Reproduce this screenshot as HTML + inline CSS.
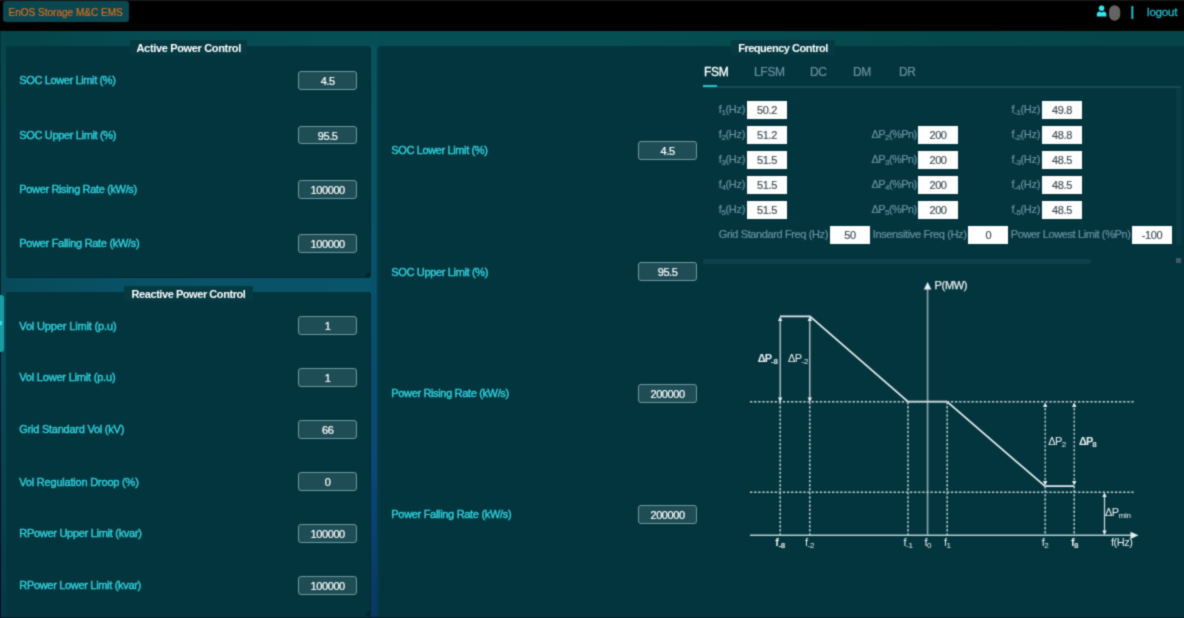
<!DOCTYPE html>
<html>
<head>
<meta charset="utf-8">
<title>EnOS Storage M&amp;C EMS</title>
<style>
*{box-sizing:border-box;margin:0;padding:0}
html,body{width:1184px;height:618px;overflow:hidden;background:#044a53;font-family:"Liberation Sans",sans-serif;}
#root{position:relative;width:1184px;height:618px;overflow:hidden;background:linear-gradient(90deg,#054347 0%,#054a50 10%,#054e54 28%,#054e52 52%,#05484c 80%,#054448 100%);filter:url(#bl);}
.abs{position:absolute}
#hdr{left:0;top:0;width:1184px;height:31px;background:#000}
#logo{left:3px;top:1px;width:126px;height:21px;background:#0b4750;border-radius:3px;color:#de6e1c;font-size:11px;line-height:22px;text-align:center;letter-spacing:0;white-space:nowrap;overflow:hidden}
#logo span{display:inline-block;transform:scaleX(0.912);transform-origin:50% 50%;margin:0 -20px;-webkit-text-stroke:0.2px #de6e1c}
.panel{background:#03353f;border-radius:3px}
.ptitle{position:absolute;padding-top:1px;height:15px;background:#053a43;color:#fff;font-weight:bold;font-size:11px;line-height:15px;text-align:center;white-space:nowrap;letter-spacing:-0.3px;border-radius:1px}
.lbl{position:absolute;-webkit-text-stroke:0.4px #31d0da;color:#31d0da;margin-top:-0.5px;font-size:11px;line-height:14px;white-space:nowrap;letter-spacing:-0.3px;transform-origin:0 50%}
.inp{-webkit-text-stroke:0.2px #fff;position:absolute;width:58.8px;height:18.8px;border:1.8px solid #6f979c;border-radius:3px;background:#1e4d56;color:#fff;font-size:11px;line-height:18.6px;text-align:center;letter-spacing:-0.4px}
.tab{position:absolute;top:64px;font-size:12px;line-height:16px;-webkit-text-stroke:0.2px #6a8fa0;color:#6a8fa0;white-space:nowrap;letter-spacing:-0.3px}
.fl{position:absolute;-webkit-text-stroke:0.2px #6793a2;color:#6793a2;font-size:11px;line-height:14px;white-space:nowrap;letter-spacing:-0.3px;text-align:right}
.fl sub{font-size:8px;letter-spacing:-0.5px;vertical-align:baseline;position:relative;top:2px}
.fi{-webkit-text-stroke:0.15px #3a4a52;position:absolute;width:40px;height:18px;background:#fff;color:#3a4a52;font-size:11px;line-height:18px;text-align:center;letter-spacing:-0.4px}
</style>
</head>
<body>
<svg width="0" height="0" style="position:absolute"><filter id="bl" x="0" y="0" width="100%" height="100%" color-interpolation-filters="sRGB"><feConvolveMatrix order="3" kernelMatrix="1 3 1 3 12 3 1 3 1" divisor="28" edgeMode="duplicate" preserveAlpha="true"/></filter></svg>
<div id="root">
  <!-- header -->
  <div id="hdr" class="abs"></div>
  <div id="logo" class="abs"><span>EnOS Storage M&amp;C EMS</span></div>

  <!-- header right -->
  <div class="abs" style="left:0;top:0;width:1184px;height:1px;background:#171717"></div>
  <svg class="abs" style="left:1094px;top:3px" width="90" height="20" viewBox="0 0 90 20">
    <circle cx="7.6" cy="5.2" r="2.75" fill="#35e6ee"/>
    <path d="M2.8 13.6 V11.6 Q2.8 8.6 5.6 8.4 L7.6 9.6 L9.6 8.4 Q12.4 8.6 12.4 11.6 V13.6 Z" fill="#35e6ee"/>
    <rect x="15" y="2.3" width="11.2" height="15.4" rx="5.6" fill="#646464"/>
    <rect x="37.4" y="3" width="1.9" height="13" fill="#22c8d2"/>
  </svg>
  <div class="abs" style="left:1147px;top:5.3px;color:#22bccb;-webkit-text-stroke:0.3px #22bccb;font-size:11.6px;line-height:14px;letter-spacing:-0.2px">logout</div>

  <!-- left strip -->
  <div class="abs" style="left:0;top:31px;width:6px;height:587px;background:linear-gradient(180deg,#05464c 0%,#064a55 25%,#064c5a 45%,#064858 60%,#053848 100%)"></div>
  <div class="abs" style="left:0;top:31px;width:1px;height:587px;background:linear-gradient(180deg,#03303a,#031a28 60%,#030c22)"></div>
  <!-- divider -->
  <div class="abs" style="left:370px;top:46px;width:7.7px;height:572px;background:linear-gradient(180deg,#06525c 0%,#08535f 15%,#09506a 41%,#0a4974 72%,#093765 100%)"></div>
  <!-- panel 1 -->
  <div class="abs panel" id="p1" style="left:6px;top:46.3px;width:363.6px;height:230.7px;box-shadow:1px 1px 0 #022a33"></div>
  <!-- band between -->
  <div class="abs" style="left:1px;top:278px;width:370px;height:14px;background:linear-gradient(90deg,#074b5a,#085266 40%,#08546a)"></div>
  <!-- panel 2 -->
  <div class="abs panel" id="p2" style="left:6px;top:292px;width:363.6px;height:330px;box-shadow:1px 0 0 #022a33"></div>
  <!-- big panel -->
  <div class="abs panel" id="p3" style="left:377.3px;top:46.3px;width:810px;height:580px;background:linear-gradient(90deg,#053b4a 0,#03353f 4px)"></div>

  <div class="abs" style="left:0;top:616.6px;width:1184px;height:1.4px;background:rgba(0,14,20,0.55)"></div>
  <svg class="abs" style="left:364px;top:271px" width="6" height="6"><path d="M5.5 0.5 L5.5 5.5 L0.5 5.5 Z" fill="#02222a"/></svg>
  <svg class="abs" style="left:364px;top:610px" width="6" height="6"><path d="M5.5 0.5 L5.5 5.5 L0.5 5.5 Z" fill="#02222a"/></svg>
  <!-- handle -->
  <div class="abs" style="left:0;top:295px;width:4.2px;height:57px;background:#1a9ca3;border-radius:0 3px 3px 0"></div>
  <div class="abs" style="left:0;top:321px;width:2px;height:4px;background:#2fe0e8"></div>

  <!-- titles -->
  <div class="ptitle" style="left:130px;top:40.3px;width:116.5px;letter-spacing:-0.34px;text-indent:1px">Active Power Control</div>
  <div class="ptitle" style="left:124px;top:286px;width:129px;letter-spacing:-0.44px">Reactive Power Control</div>
  <div class="ptitle" style="left:731px;top:40px;width:104px;letter-spacing:-0.48px">Frequency Control</div>

  <!-- panel1 rows -->
  <div class="lbl" style="left:19.3px;top:73px;letter-spacing:-0.37px">SOC Lower Limit (%)</div><div class="inp" style="left:298.3px;top:71.3px">4.5</div>
  <div class="lbl" style="left:19.3px;top:128px;letter-spacing:-0.34px">SOC Upper Limit (%)</div><div class="inp" style="left:298.3px;top:125.7px">95.5</div>
  <div class="lbl" style="left:19.3px;top:182px;letter-spacing:-0.35px">Power Rising Rate (kW/s)</div><div class="inp" style="left:298.3px;top:179.9px">100000</div>
  <div class="lbl" style="left:19.3px;top:236px;letter-spacing:-0.31px">Power Falling Rate (kW/s)</div><div class="inp" style="left:298.3px;top:234px">100000</div>

  <!-- panel2 rows -->
  <div class="lbl" style="left:19.3px;top:319px;letter-spacing:-0.15px">Vol Upper Limit (p.u)</div><div class="inp" style="left:298.3px;top:316.4px">1</div>
  <div class="lbl" style="left:19.3px;top:370.5px;letter-spacing:-0.2px">Vol Lower Limit (p.u)</div><div class="inp" style="left:298.3px;top:368.4px">1</div>
  <div class="lbl" style="left:19.3px;top:422.3px;letter-spacing:-0.24px">Grid Standard Vol (kV)</div><div class="inp" style="left:298.3px;top:420.4px">66</div>
  <div class="lbl" style="left:19.3px;top:475px;letter-spacing:-0.2px">Vol Regulation Droop (%)</div><div class="inp" style="left:298.3px;top:472.4px">0</div>
  <div class="lbl" style="left:19.3px;top:526px;letter-spacing:-0.29px">RPower Upper Limit (kvar)</div><div class="inp" style="left:298.3px;top:524.4px">100000</div>
  <div class="lbl" style="left:19.3px;top:578px;letter-spacing:-0.32px">RPower Lower Limit (kvar)</div><div class="inp" style="left:298.3px;top:576.4px">100000</div>

  <!-- middle rows -->
  <div class="lbl" style="left:391.3px;top:143px;letter-spacing:-0.37px">SOC Lower Limit (%)</div><div class="inp" style="left:638.2px;top:141px">4.5</div>
  <div class="lbl" style="left:391.3px;top:265px;letter-spacing:-0.34px">SOC Upper Limit (%)</div><div class="inp" style="left:638.2px;top:262px">95.5</div>
  <div class="lbl" style="left:391.3px;top:386px;letter-spacing:-0.35px">Power Rising Rate (kW/s)</div><div class="inp" style="left:638.2px;top:384px">200000</div>
  <div class="lbl" style="left:391.3px;top:507px;letter-spacing:-0.31px">Power Falling Rate (kW/s)</div><div class="inp" style="left:638.2px;top:505px">200000</div>

  <!-- tabs -->
  <div class="tab" style="left:704px;color:#fff;-webkit-text-stroke:0.3px #fff">FSM</div>
  <div class="tab" style="left:754px">LFSM</div>
  <div class="tab" style="left:810px">DC</div>
  <div class="tab" style="left:853px">DM</div>
  <div class="tab" style="left:899px">DR</div>
  <div class="abs" style="left:703px;top:86px;width:478px;height:1.5px;background:#114c59"></div>
  <div class="abs" style="left:703px;top:85.3px;width:14px;height:2px;background:#2bc0c8"></div>

  <!-- freq form -->
  <div class="fl" style="left:699px;width:46px;top:102px">f<sub>1</sub>(Hz)</div><div class="fi" style="left:747px;top:101px">50.2</div>
  <div class="fl" style="left:994px;width:46px;top:102px">f<sub>-1</sub>(Hz)</div><div class="fi" style="left:1042px;top:101px">49.8</div>
  <div class="fl" style="left:699px;width:46px;top:127px">f<sub>2</sub>(Hz)</div><div class="fi" style="left:747px;top:126px">51.2</div>
  <div class="fl" style="left:858.5px;width:58px;letter-spacing:-0.6px;top:127px">&Delta;P<sub>2</sub>(%Pn)</div><div class="fi" style="left:918px;top:126px">200</div>
  <div class="fl" style="left:994px;width:46px;top:127px">f<sub>-2</sub>(Hz)</div><div class="fi" style="left:1042px;top:126px">48.8</div>
  <div class="fl" style="left:699px;width:46px;top:152px">f<sub>3</sub>(Hz)</div><div class="fi" style="left:747px;top:151px">51.5</div>
  <div class="fl" style="left:858.5px;width:58px;letter-spacing:-0.6px;top:152px">&Delta;P<sub>3</sub>(%Pn)</div><div class="fi" style="left:918px;top:151px">200</div>
  <div class="fl" style="left:994px;width:46px;top:152px">f<sub>-3</sub>(Hz)</div><div class="fi" style="left:1042px;top:151px">48.5</div>
  <div class="fl" style="left:699px;width:46px;top:177px">f<sub>4</sub>(Hz)</div><div class="fi" style="left:747px;top:176px">51.5</div>
  <div class="fl" style="left:858.5px;width:58px;letter-spacing:-0.6px;top:177px">&Delta;P<sub>4</sub>(%Pn)</div><div class="fi" style="left:918px;top:176px">200</div>
  <div class="fl" style="left:994px;width:46px;top:177px">f<sub>-4</sub>(Hz)</div><div class="fi" style="left:1042px;top:176px">48.5</div>
  <div class="fl" style="left:699px;width:46px;top:202px">f<sub>5</sub>(Hz)</div><div class="fi" style="left:747px;top:201px">51.5</div>
  <div class="fl" style="left:858.5px;width:58px;letter-spacing:-0.6px;top:202px">&Delta;P<sub>5</sub>(%Pn)</div><div class="fi" style="left:918px;top:201px">200</div>
  <div class="fl" style="left:994px;width:46px;top:202px">f<sub>-5</sub>(Hz)</div><div class="fi" style="left:1042px;top:201px">48.5</div>
  <div class="fl" style="left:700px;width:128px;letter-spacing:-0.38px;top:227px">Grid Standard Freq (Hz)</div><div class="fi" style="left:830px;top:226px">50</div>
  <div class="fl" style="left:860px;width:106.5px;letter-spacing:-0.37px;top:227px">Insensitive Freq (Hz)</div><div class="fi" style="left:968.4px;top:226px">0</div>
  <div class="fl" style="left:1000px;width:130.5px;letter-spacing:-0.39px;top:227px">Power Lowest Limit (%Pn)</div><div class="fi" style="left:1132px;top:226px">-100</div>
  <div class="abs" style="left:703px;top:259px;width:388px;height:5px;background:#0d404a;border-radius:2px"></div>
  <div class="abs" style="left:1176px;top:258.3px;width:5.4px;height:5.2px;background:#43586a"></div>
  <div class="abs" style="left:1176px;top:88px;width:5.5px;height:157px;background:#083b46"></div>
  <svg class="abs" style="left:700px;top:270px" width="484" height="300" viewBox="700 270 484 300" font-family="Liberation Sans, sans-serif">
    <g stroke="#cfdcde" stroke-width="1.5" fill="none">
      <!-- axes -->
      <line x1="750" y1="535.3" x2="1132" y2="535.3" stroke="#bccdd0" stroke-width="1.6"/>
      <line x1="927.6" y1="289" x2="927.6" y2="535" stroke="#88a8af" stroke-width="1.6"/>
      <!-- curve -->
      <polyline points="780,316.3 810,316.3 908,401.6 947,401.6 1045,486.2 1074,486.2" stroke="#e2ebed" stroke-width="1.7"/>
      <!-- dashed -->
      <g stroke-dasharray="2.4 1.7" stroke="#b9cbce">
        <line x1="750" y1="401.7" x2="1134" y2="401.7"/>
        <line x1="750" y1="492.2" x2="1134" y2="492.2"/>
        <line x1="780.2" y1="402" x2="780.2" y2="535"/>
        <line x1="809.8" y1="402" x2="809.8" y2="535"/>
        <line x1="908" y1="402" x2="908" y2="535"/>
        <line x1="947.2" y1="402" x2="947.2" y2="535"/>
        <line x1="1045.2" y1="486" x2="1045.2" y2="535"/>
        <line x1="1074.2" y1="486" x2="1074.2" y2="535"/>
      </g>
      <!-- arrows lines -->
      <g stroke-width="1.2">
      <line x1="780.2" y1="318" x2="780.2" y2="401"/>
      <line x1="809.8" y1="318" x2="809.8" y2="401"/>
      <line x1="1045.2" y1="404" x2="1045.2" y2="484" stroke-dasharray="2.4 1.7"/>
      <line x1="1074.2" y1="404" x2="1074.2" y2="484" stroke-dasharray="2.4 1.7"/>
      <line x1="1104.5" y1="494" x2="1104.5" y2="534"/>
      </g>
    </g>
    <g fill="#e6eef0">
      <path d="M927.6 282 L923.8 289.5 L931.4 289.5 Z"/>
      <path d="M1138.5 535.3 L1130.5 531.7 L1130.5 538.9 Z"/>
      <path d="M780.2 316.5 l-2.2 4.5 h4.4 Z M780.2 402 l-2.2 -4.5 h4.4 Z"/>
      <path d="M809.8 316.5 l-2.2 4.5 h4.4 Z M809.8 402 l-2.2 -4.5 h4.4 Z"/>
      <path d="M1045.2 402.5 l-2.2 4.5 h4.4 Z M1045.2 485.5 l-2.2 -4.5 h4.4 Z"/>
      <path d="M1074.2 402.5 l-2.2 4.5 h4.4 Z M1074.2 485.5 l-2.2 -4.5 h4.4 Z"/>
      <path d="M1104.5 492.5 l-2.2 4.5 h4.4 Z M1104.5 535 l-2.2 -4.5 h4.4 Z"/>
    </g>
    <g fill="#e6eef0" font-size="11" letter-spacing="-0.6">
      <text x="934.6" y="288.7" font-size="11" letter-spacing="-0.35" stroke="#e6eef0" stroke-width="0.25">P(MW)</text>
      <text x="757.8" y="361.7" font-weight="bold" letter-spacing="-1">&#916;P<tspan font-size="8" dy="2" letter-spacing="-0.2">-8</tspan></text>
      <text x="788" y="361.7">&#916;P<tspan font-size="8" dy="2" letter-spacing="-0.2">-2</tspan></text>
      <text x="1048.3" y="445.3">&#916;P<tspan font-size="8" dy="2" letter-spacing="-0.2">2</tspan></text>
      <text x="1079" y="445.3" font-weight="bold" letter-spacing="-1">&#916;P<tspan font-size="8" dy="2" letter-spacing="-0.2">8</tspan></text>
      <text x="1105" y="515.8">&#916;P<tspan font-size="8" dy="2" letter-spacing="-0.2">min</tspan></text>
      <text x="775.3" y="546.3" font-weight="bold">f<tspan font-size="8" dy="2" letter-spacing="-0.2">-8</tspan></text>
      <text x="805" y="546.3">f<tspan font-size="8" dy="2" letter-spacing="-0.2">-2</tspan></text>
      <text x="903.6" y="546.3">f<tspan font-size="8" dy="2" letter-spacing="-0.2">-1</tspan></text>
      <text x="924.6" y="546.3">f<tspan font-size="8" dy="2" letter-spacing="-0.2">0</tspan></text>
      <text x="944" y="546.3">f<tspan font-size="8" dy="2" letter-spacing="-0.2">1</tspan></text>
      <text x="1041.8" y="546.3">f<tspan font-size="8" dy="2" letter-spacing="-0.2">2</tspan></text>
      <text x="1071" y="546.3" font-weight="bold">f<tspan font-size="8" dy="2" letter-spacing="-0.2">8</tspan></text>
      <text x="1111" y="546.3" font-size="11" letter-spacing="-0.5">f(Hz)</text>
    </g>
  </svg>
</div>
</body>
</html>
